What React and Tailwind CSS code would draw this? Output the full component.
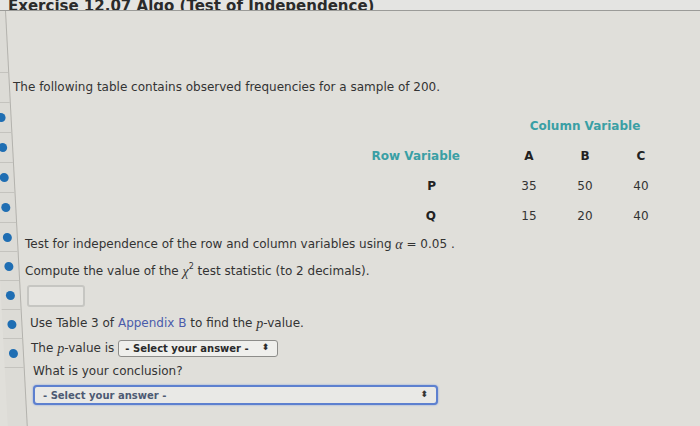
import React from 'react';

const Strip = () => (
  <div className="ml-[-14px] w-[20px] shrink-0 origin-top-left skew-x-3 border-r border-[#b3b2ad] bg-[#dcdbd6]">
    <div className="h-[61px]" />
    {[0, 1, 2, 3, 4, 5, 6, 7, 8, 9].map(i => (
      <div key={i} className={`flex ${i > 4 ? 'h-[29px]' : 'h-[30px]'} items-center justify-center border-t border-[#c4c3be]`}>
        {i > 0 && <span className="h-[9px] w-[9px] rounded-full bg-[#1f6eb3]" />}
      </div>
    ))}
    <div className="border-t border-[#c4c3be]" />
  </div>
);

const Math = ({ children }) => (
  <span className="font-['Liberation_Serif',serif] text-[14px] italic">{children}</span>
);

const SmallSelect = () => (
  <span className="ml-[4px] inline-flex h-[17px] w-[160px] items-center justify-between rounded-[3px] border border-[#8d8d8a] bg-[#efefec] pl-[6px] pr-[8px] text-[10px] font-bold text-[#2a2a2a]">
    <span>- Select your answer -</span>
    <span className="text-[9px]">⬍</span>
  </span>
);

export default function App() {
  return (
    <div className="flex h-[426px] w-[700px] flex-col overflow-hidden bg-[#e0dfda] font-['DejaVu_Sans',sans-serif] text-[12px] text-[#333]">
      <div className="flex h-[11px] shrink-0 items-end overflow-hidden border-b border-[#9b9b98] bg-[#e4e4e2] pl-[8px]">
        <div className="mb-[-5px] text-[15px] font-bold leading-[18px] text-[#2b2b2b]">Exercise 12.07 Algo (Test of Independence)</div>
      </div>
      <div className="flex flex-1">
        <Strip />
        <div className="flex-1">
          <div className="mt-[66px] flex h-[20px] items-center pl-[7px]">
            The following table contains observed frequencies for a sample of 200.
          </div>

          <div className="mt-[14px] ml-[294px] text-[12px] font-bold">
            <div className="flex h-[30px] items-center">
              <div className="w-[201px]" />
              <div className="w-[168px] text-center text-[#3a9fa5]">Column Variable</div>
            </div>
            <div className="flex h-[30px] items-center text-[#222]">
              <div className="w-[201px] pr-[41px] text-right text-[#3a9fa5]">Row Variable</div>
              <div className="w-[56px] text-center">A</div>
              <div className="w-[56px] text-center">B</div>
              <div className="w-[56px] text-center">C</div>
            </div>
            <div className="flex h-[30px] items-center">
              <div className="w-[201px] pr-[65px] text-right text-[#222]">P</div>
              <div className="w-[56px] text-center font-normal">35</div>
              <div className="w-[56px] text-center font-normal">50</div>
              <div className="w-[56px] text-center font-normal">40</div>
            </div>
            <div className="flex h-[30px] items-center">
              <div className="w-[201px] pr-[65px] text-right text-[#222]">Q</div>
              <div className="w-[56px] text-center font-normal">15</div>
              <div className="w-[56px] text-center font-normal">20</div>
              <div className="w-[56px] text-center font-normal">40</div>
            </div>
          </div>

          <div className="flex h-[26px] items-center pl-[19px]">
            Test for independence of the row and column variables using&nbsp;<Math>α</Math>&nbsp;=&nbsp;0.05 .
          </div>
          <div className="flex h-[28px] items-center pl-[19px]">
            Compute the value of the&nbsp;<Math>χ</Math><sup className="text-[8px]">2</sup>&nbsp;test statistic (to 2 decimals).
          </div>
          <div className="pl-[21px]">
            <div className="h-[22px] w-[58px] rounded-[3px] border-2 border-[#c6c6c2] bg-[#e6e5e1]" />
          </div>
          <div className="mt-[4px] flex h-[24px] items-center pl-[24px]">
            Use Table 3 of&nbsp;<span className="text-[#4a5bab]">Appendix B</span>&nbsp;to find the&nbsp;<Math>p</Math>-value.
          </div>
          <div className="mt-[2px] flex h-[22px] items-center pl-[25px]">
            The&nbsp;<Math>p</Math>-value is
            <SmallSelect />
          </div>
          <div className="mt-[2px] flex h-[20px] items-center pl-[27px]">What is your conclusion?</div>
          <div className="mt-[4px] pl-[27px]">
            <div className="flex h-[20px] w-[405px] items-center justify-between rounded-[4px] border-2 border-[#5d80cf] bg-[#e9e9e6] pl-[8px] pr-[8px] text-[10px] font-bold text-[#4d5a73] shadow-[0_0_2px_#7b9be0]">
              <span>- Select your answer -</span>
              <span className="text-[9px] text-[#333]">⬍</span>
            </div>
          </div>
        </div>
      </div>
    </div>
  );
}
